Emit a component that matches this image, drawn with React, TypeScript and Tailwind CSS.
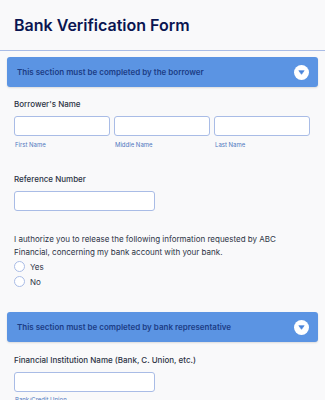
import React from "react";

function Banner(props: { text: string }) {
  return (
    <div className="mx-[7px] flex h-[30px] items-center justify-between rounded-[3px] bg-[#5b94e3] pl-[10px] pr-[9px] shadow-[0_1px_2px_rgba(0,0,0,0.12)]">
      <span className="text-[8px] font-semibold leading-[10px] text-[#1c3d86]">{props.text}</span>
      <span className="flex h-[15px] w-[15px] items-center justify-center rounded-full bg-white">
        <svg width="7" height="5" viewBox="0 0 8 6">
          <path d="M0.8 0.8 H7.2 L4 5.2 Z" fill="#4a85dc" stroke="#4a85dc" strokeWidth="0.8" strokeLinejoin="round" />
        </svg>
      </span>
    </div>
  );
}

function Field(props: { className?: string }) {
  return (
    <div
      className={
        "h-[20px] rounded-[3px] border border-[#a9bce6] bg-white " + (props.className ?? "")
      }
    />
  );
}

function Radio(props: { label: string }) {
  return (
    <label className="flex h-[11px] items-center gap-[5px]">
      <span className="h-[11px] w-[11px] rounded-full border border-[#a9bce6] bg-white" />
      <span className="text-[8px] leading-[10px] text-[#2c3345]">{props.label}</span>
    </label>
  );
}

export default function App() {
  return (
    <div
      className="h-[400px] w-[325px] overflow-hidden bg-[#f9f9fa]"
      style={{ fontFamily: "Inter, 'Noto Sans', sans-serif" }}
    >
      <div className="flex h-[51px] items-center border-b border-[#a9bce6] px-[14px]">
        <h1 className="text-[16px] font-semibold leading-[20px] text-[#0a1551]">
          Bank Verification Form
        </h1>
      </div>

      <div className="pt-[6px]">
        <Banner text="This section must be completed by the borrower" />
      </div>

      <div className="px-[14px]">
        <div className="pt-[12px] text-[8px] font-medium leading-[10px] text-[#2c3345]">
          Borrower's Name
        </div>
        <div className="mt-[7px] grid w-[296px] grid-cols-3 gap-[4px]">
          {["First Name", "Middle Name", "Last Name"].map((s) => (
            <div key={s} className="flex flex-col">
              <Field />
              <span className="mt-[5px] pl-[1px] text-[6px] leading-[8px] text-[#5078c0]">{s}</span>
            </div>
          ))}
        </div>

        <div className="pt-[25px] text-[8px] font-medium leading-[10px] text-[#2c3345]">
          Reference Number
        </div>
        <Field className="mt-[7px] w-[141px]" />

        <p className="pt-[22px] text-[8px] leading-[13px] text-[#2c3345]">
          I authorize you to release the following information requested by ABC Financial,
          concerning my bank account with your bank.
        </p>
        <div className="mt-[2px] flex flex-col gap-[4px]">
          <Radio label="Yes" />
          <Radio label="No" />
        </div>
      </div>

      <div className="pt-[25px]">
        <Banner text="This section must be completed by bank representative" />
      </div>

      <div className="px-[14px]">
        <div className="pt-[13px] text-[8px] font-medium leading-[10px] text-[#2c3345]">
          Financial Institution Name (Bank, C. Union, etc.)
        </div>
        <Field className="mt-[7px] w-[141px]" />
        <span className="mt-[4px] block pl-[1px] text-[6px] leading-[8px] text-[#5078c0]">
          Bank/Credit Union
        </span>
      </div>
    </div>
  );
}
